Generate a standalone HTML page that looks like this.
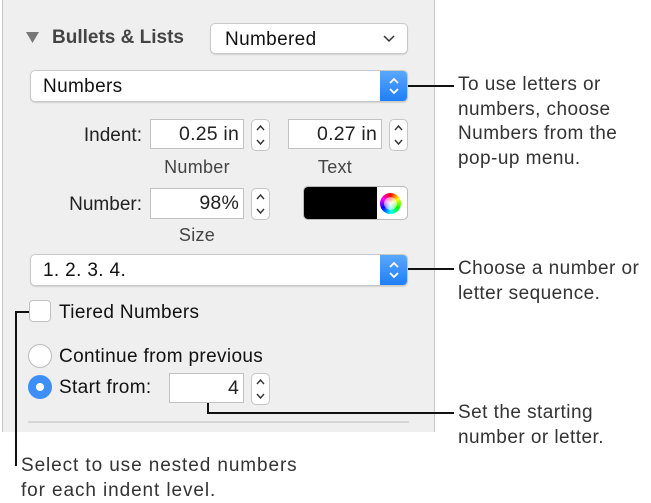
<!DOCTYPE html>
<html><head><style>
*{margin:0;padding:0;box-sizing:border-box}
body{width:651px;height:498px;background:#fff;position:relative;font-family:"Liberation Sans",sans-serif;overflow:hidden}
.a{position:absolute}
.panel{left:2px;top:0;width:433px;height:432px;background:#efefef;border-left:1.5px solid #c8c8c8;border-right:1.5px solid #c8c8c8}
.pop{background:#fff;border:1px solid #c9c9c9;border-radius:5px;box-shadow:0 1px 1px rgba(0,0,0,.12)}
.fld{background:#fff;border:1px solid #c2c2c2;text-align:right;font-size:19.5px;color:#222;padding-right:4px;line-height:28px;letter-spacing:.2px}
.stp{background:#fff;border:1px solid #c6c6c6;border-radius:5px;width:19px;height:32px}
.lbl{font-size:19px;color:#222;text-align:right;width:120px}
.sub{font-size:18px;color:#444;text-align:center;width:100px;letter-spacing:.3px}
.t{font-size:19px;color:#333;line-height:24.5px;letter-spacing:.45px}
.ln{background:#111}
.c{font-size:19px;color:#111;letter-spacing:.35px}
</style></head><body>
<div class="a panel"></div>
<svg class="a" style="left:26px;top:32px" width="14" height="12"><path d="M0 0H13L6.5 11Z" fill="#777"/></svg>
<div class="a" style="left:52px;top:27px;font-size:19px;font-weight:bold;color:#444">Bullets &amp; Lists</div>
<div class="a pop" style="left:210px;top:23px;width:198px;height:31px"></div>
<div class="a c" style="left:225px;top:29px">Numbered</div>
<svg class="a" style="left:383px;top:35px" width="12" height="8"><path d="M1 1L6 6L11 1" stroke="#333" stroke-width="1.5" fill="none"/></svg>

<div class="a pop" style="left:30px;top:70px;width:378px;height:32px;overflow:hidden"><div class="a" style="right:0;top:0;width:27px;height:32px;background:linear-gradient(#5aa7ff,#1a7cf5)"></div></div>
<div class="a c" style="left:43px;top:76px">Numbers</div>
<svg class="a" style="left:387px;top:74px" width="14" height="24"><path d="M3 9L7 5L11 9M3 15L7 19L11 15" stroke="#fff" stroke-width="1.8" fill="none"/></svg>

<div class="a lbl" style="left:22px;top:125px">Indent:</div>
<div class="a fld" style="left:150px;top:119px;width:94px;height:30px">0.25 in</div>
<div class="a stp" style="left:251px;top:119px"></div>
<svg class="a" style="left:251px;top:119px" width="19" height="32"><path d="M6 11L9.5 7L13 11M6 21L9.5 25L13 21" stroke="#333" stroke-width="1.4" fill="none"/></svg>
<div class="a fld" style="left:288px;top:119px;width:94px;height:30px">0.27 in</div>
<div class="a stp" style="left:389px;top:119px"></div>
<svg class="a" style="left:389px;top:119px" width="19" height="32"><path d="M6 11L9.5 7L13 11M6 21L9.5 25L13 21" stroke="#333" stroke-width="1.4" fill="none"/></svg>
<div class="a sub" style="left:147px;top:157px">Number</div>
<div class="a sub" style="left:285px;top:157px">Text</div>

<div class="a lbl" style="left:22px;top:194px">Number:</div>
<div class="a fld" style="left:150px;top:188px;width:94px;height:31px">98%</div>
<div class="a stp" style="left:251px;top:188px"></div>
<svg class="a" style="left:251px;top:188px" width="19" height="32"><path d="M6 11L9.5 7L13 11M6 21L9.5 25L13 21" stroke="#333" stroke-width="1.4" fill="none"/></svg>
<div class="a" style="left:303px;top:186px;width:105px;height:34px;border:1px solid #bbb;border-radius:5px;background:#fff;overflow:hidden"><div style="width:73px;height:34px;background:#000"></div></div>
<div class="a" style="left:380px;top:193px;width:21px;height:21px;border-radius:50%;background:conic-gradient(red,yellow,lime,cyan,blue,magenta,red)"><div style="margin:4px;width:13px;height:13px;border-radius:50%;background:radial-gradient(#fff,rgba(255,255,255,.3))"></div></div>
<div class="a sub" style="left:147px;top:225px">Size</div>

<div class="a pop" style="left:30px;top:254px;width:378px;height:32px;overflow:hidden"><div class="a" style="right:0;top:0;width:27px;height:32px;background:linear-gradient(#5aa7ff,#1a7cf5)"></div></div>
<div class="a c" style="left:43px;top:260px">1. 2. 3. 4.</div>
<svg class="a" style="left:387px;top:258px" width="14" height="24"><path d="M3 9L7 5L11 9M3 15L7 19L11 15" stroke="#fff" stroke-width="1.8" fill="none"/></svg>

<div class="a" style="left:29px;top:300px;width:22px;height:22px;background:#fff;border:1px solid #c0c0c0;border-radius:4px"></div>
<div class="a c" style="left:59px;top:302px">Tiered Numbers</div>
<div class="a" style="left:28px;top:344px;width:24px;height:24px;border-radius:50%;background:#fff;border:1px solid #bbb"></div>
<div class="a c" style="left:59px;top:346px">Continue from previous</div>
<div class="a" style="left:28px;top:375px;width:24px;height:24px;border-radius:50%;background:#3d8ff5"><div style="margin:8px;width:8px;height:8px;border-radius:50%;background:#fff"></div></div>
<div class="a c" style="left:59px;top:377px">Start from:</div>
<div class="a fld" style="left:169px;top:373px;width:75px;height:30px">4</div>
<div class="a stp" style="left:251px;top:373px"></div>
<svg class="a" style="left:251px;top:373px" width="19" height="32"><path d="M6 11L9.5 7L13 11M6 21L9.5 25L13 21" stroke="#333" stroke-width="1.4" fill="none"/></svg>
<div class="a" style="left:28px;top:421px;width:381px;height:1.5px;background:#d6d6d6"></div>

<div class="a ln" style="left:408px;top:85px;width:46px;height:1.5px"></div>
<div class="a ln" style="left:408px;top:268px;width:46px;height:1.5px"></div>
<div class="a ln" style="left:207px;top:403px;width:1.5px;height:11px"></div>
<div class="a ln" style="left:207px;top:412px;width:247px;height:1.5px"></div>
<div class="a ln" style="left:15px;top:311px;width:14px;height:1.5px"></div>
<div class="a ln" style="left:15px;top:311px;width:1.5px;height:155px"></div>

<div class="a t" style="left:458px;top:73px">To use letters or<br>numbers, choose<br>Numbers from the<br>pop-up menu.</div>
<div class="a t" style="left:458px;top:257px">Choose a number or<br>letter sequence.</div>
<div class="a t" style="left:458px;top:401px">Set the starting<br>number or letter.</div>
<div class="a t" style="left:21px;top:454px;letter-spacing:.9px">Select to use nested numbers<br>for each indent level.</div>
</body></html>
